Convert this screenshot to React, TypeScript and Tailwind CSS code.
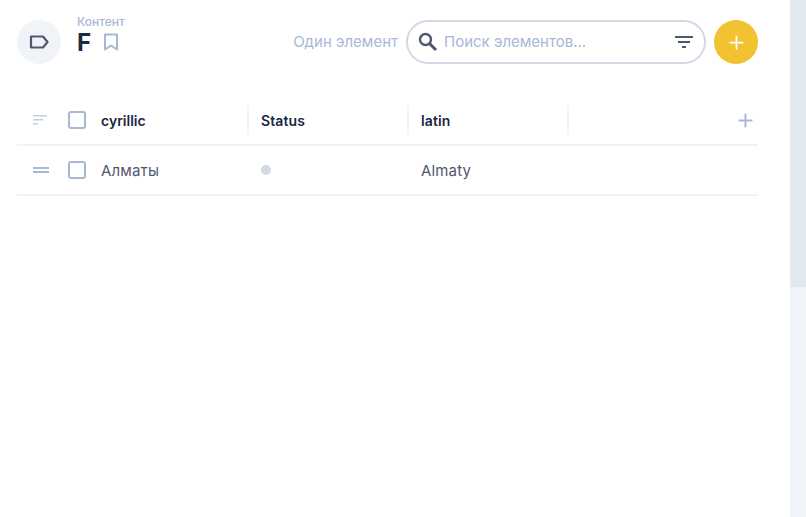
import { Plus } from "lucide-react";

function Checkbox() {
  return <span className="block w-[18px] h-[18px] border-2 border-[#a8b8d4] rounded-[3px] bg-white" />;
}

function HeaderCell({ label }: { label: string }) {
  return (
    <div className="w-[160px] h-7 flex items-center pl-3 border-r-2 border-[#f0f4f8]">
      <span className="text-sm font-semibold text-[#1a2842] tracking-[0.1px] translate-y-px">{label}</span>
    </div>
  );
}

export default function App() {
  return (
    <div className="flex h-[517px] w-[806px] overflow-hidden bg-white font-['Inter',sans-serif]">
      <main className="w-[790px] pl-[17px] pr-[32px] pt-[13px]">
        <header className="flex items-start h-[83px]">
          <div className="mt-[7px] w-11 h-11 rounded-full bg-[#f0f4f8] flex items-center justify-center">
            <svg width="20" height="16" viewBox="0 0 20 16" fill="none" stroke="#50586e" strokeWidth="2.200" strokeLinejoin="round">
              <path d="M2 2.500h12L18.500 8 14 13.500H2z" />
            </svg>
          </div>
          <div className="ml-4">
            <div className="text-xs leading-[18px] font-medium text-[#a8b8d4]">Контент</div>
            <div className="flex items-center">
              <span className="text-[24px] leading-[24px] font-bold text-[#1a2842]">F</span>
              <svg className="ml-3 -translate-y-px" width="16" height="18" viewBox="0 0 16 18" fill="none" stroke="#a8b8d4" strokeWidth="2" strokeLinejoin="round">
                <path d="M2 1.500h12v15l-6-4-6 4z" />
              </svg>
            </div>
          </div>
          <div className="ml-auto mt-[7px] flex items-center">
            <span className="text-[15px] text-[#a8b8d4] mr-2">Один элемент</span>
            <div className="w-[300px] h-11 rounded-full border-2 border-[#d2d9e6] flex items-center pl-2.5 pr-[11px]">
              <svg width="20" height="20" viewBox="0 0 20 20" fill="none" stroke="#50586e" strokeWidth="2.400">
                <circle cx="7.500" cy="7.500" r="5.500" />
                <path d="M11.500 11.500 18 18" strokeWidth="3" />
              </svg>
              <span className="ml-[6px] text-[15px] text-[#a8b8d4]">Поиск элементов...</span>
              <svg className="ml-auto" width="18" height="12" viewBox="0 0 18 12" fill="#50586e">
                <rect x="0" y="0" width="18" height="2" />
                <rect x="3" y="5" width="12" height="2" />
                <rect x="7" y="10" width="4" height="2" />
              </svg>
            </div>
            <button className="ml-2 w-11 h-11 rounded-full bg-[#f2c230] flex items-center justify-center">
              <Plus className="w-[21px] h-[21px] text-white" strokeWidth={2} />
            </button>
          </div>
        </header>

        <div className="flex items-center h-[50px] border-b-2 border-[#f0f4f8]">
          <div className="w-[16px] ml-[16px] flex justify-start">
            <svg width="14" height="10" viewBox="0 0 14 10" fill="#c4cfe2">
              <rect x="0" y="0" width="14" height="1.500" />
              <rect x="0" y="4" width="10" height="1.500" />
              <rect x="0" y="8" width="5" height="1.500" />
            </svg>
          </div>
          <div className="ml-[19px]">
            <Checkbox />
          </div>
          <div className="w-[148px] ml-[15px] h-7 flex items-center border-r-2 border-[#f0f4f8]">
            <span className="text-sm font-semibold text-[#1a2842] translate-y-px">cyrillic</span>
          </div>
          <HeaderCell label="Status" />
          <HeaderCell label="latin" />
          <div className="flex-1 flex justify-end pr-[2px]">
            <Plus className="w-[21px] h-[21px] text-[#a8b8d4]" strokeWidth={2.200} />
          </div>
        </div>

        <div className="flex items-center h-[50px] border-b-2 border-[#f0f4f8]">
          <div className="w-[16px] ml-[16px]">
            <div className="w-4 h-[6px] border-y-2 border-[#a8b8d4]" />
          </div>
          <div className="ml-[19px]">
            <Checkbox />
          </div>
          <span className="w-[160px] ml-[15px] text-[15px] text-[#50586e] tracking-[0.15px] translate-y-px">Алматы</span>
          <div className="w-[160px]">
            <span className="block w-2.5 h-2.5 rounded-full bg-[#d2d9e6]" />
          </div>
          <span className="text-[15px] text-[#50586e] tracking-[0.15px] translate-y-px">Almaty</span>
        </div>
      </main>
      <aside className="w-4 bg-[#f0f4f8]">
        <div className="h-[287px] bg-[#e2e8f0]" />
      </aside>
    </div>
  );
}
